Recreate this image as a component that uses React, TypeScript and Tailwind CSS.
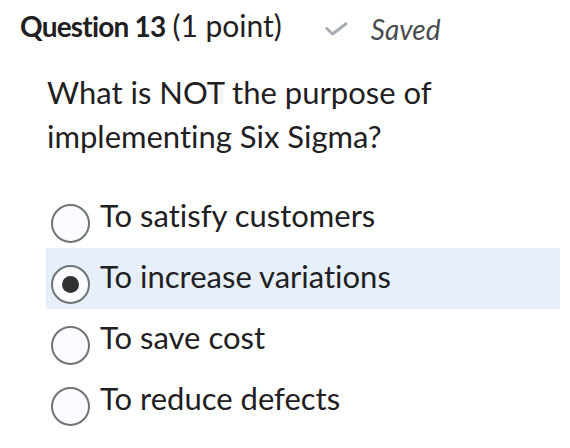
import React from "react";

const options = [
  "To satisfy customers",
  "To increase variations",
  "To save cost",
  "To reduce defects",
];

export default function App() {
  const selected = 1;
  return (
    <div
      className="w-[570px] h-[448px] bg-white text-[#1f2022] overflow-hidden [font-variant-ligatures:none]"
      style={{ fontFamily: "Lato, 'Noto Sans', sans-serif" }}
    >
      <div className="flex items-start pl-[20px] h-[46px]">
        <span className="mt-[9px] text-[28px] leading-[34px] font-bold tracking-[-0.8px]">Question 13</span>
        <span className="mt-[7px] ml-[7px] text-[30px] leading-[36px]">(1 point)</span>
        <svg className="mt-[22px] ml-[43px]" width="23" height="14" viewBox="0 0 23 14">
          <path d="M1.8 6.5 L7.5 12 L21 1.8" fill="none" stroke="#a7abb0" strokeWidth="3" strokeLinecap="round" strokeLinejoin="round" />
        </svg>
        <span className="mt-[12px] ml-[23px] text-[28px] leading-[34px] italic text-[#494c4e]">Saved</span>
      </div>
      <div className="pl-[47px] mt-[24px] text-[31px] leading-[44px]">
        <div>What is NOT the purpose of</div>
        <div>implementing Six Sigma?</div>
      </div>
      <div className="mt-[29px] ml-[46px] w-[514px] flex flex-col">
        {options.map((o, i) => (
          <div
            key={o}
            className={`flex items-start h-[61px] pl-[5px] ${i === selected ? "bg-[#e7f0fa]" : ""}`}
          >
            <div className="mt-[17px] w-[39px] h-[39px] rounded-full border-2 border-[#707477] bg-[#fbfcff] flex items-center justify-center shrink-0">
              {i === selected && <div className="w-[17px] h-[17px] rounded-full bg-[#2f3133]" />}
            </div>
            <span className="mt-[10px] ml-[10px] text-[31px] leading-[37px]">{o}</span>
          </div>
        ))}
      </div>
    </div>
  );
}
